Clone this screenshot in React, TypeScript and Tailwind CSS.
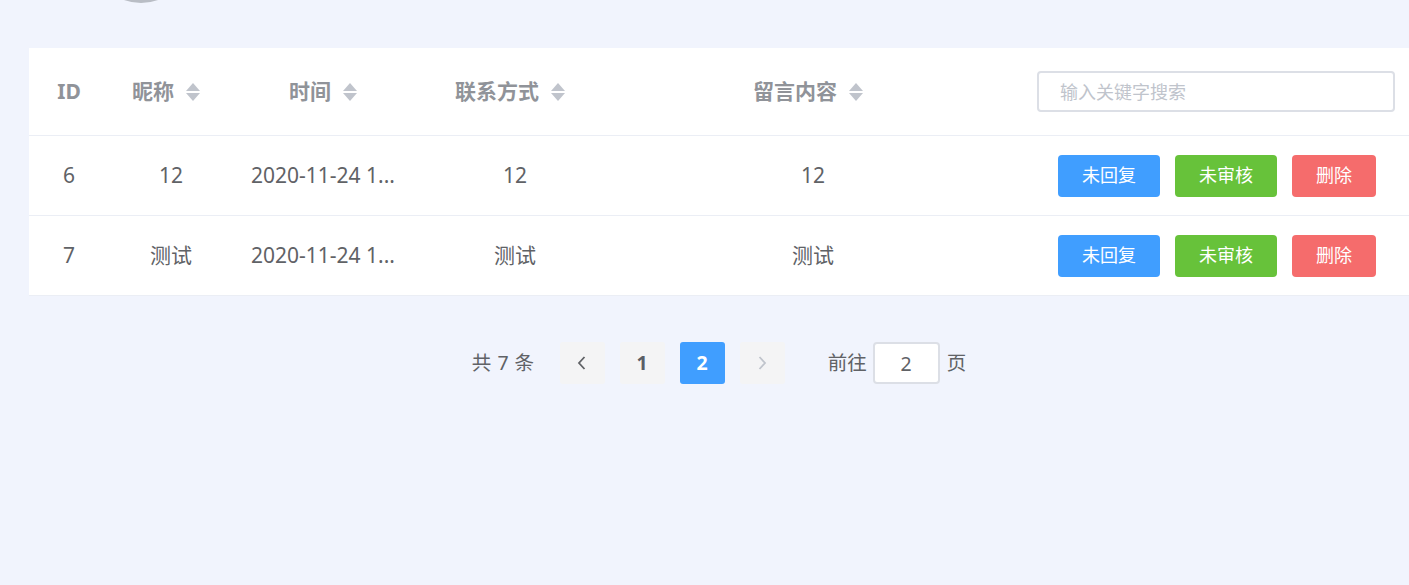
import React from "react";

const rows = [
  { id: 6, name: "12", time: "2020-11-24 1...", contact: "12", content: "12" },
  { id: 7, name: "测试", time: "2020-11-24 1...", contact: "测试", content: "测试" },
];

const SortCaret = () => (
  <span className="ml-3 inline-flex flex-col items-center gap-[2px]">
    <svg width="14" height="8" viewBox="0 0 14 8">
      <path d="M7 0 L14 8 L0 8 Z" fill="#c0c4cc" />
    </svg>
    <svg width="14" height="8" viewBox="0 0 14 8">
      <path d="M0 0 L14 0 L7 8 Z" fill="#c0c4cc" />
    </svg>
  </span>
);

const HeadCell = ({ label, w, sort = true }: { label: string; w: string; sort?: boolean }) => (
  <div className={`${w} flex items-center justify-center text-[21px] font-bold text-[#909399]`}>
    <span>{label}</span>
    {sort && <SortCaret />}
  </div>
);

export default function App() {
  return (
    <div
      className="min-h-[585px] bg-[#f1f4fd]"
      style={{ fontFamily: '"Noto Sans", "Noto Sans CJK SC", sans-serif' }}
    >
      {/* top, avatar scrolled out of view */}
      <div className="h-[48px] overflow-hidden pl-[91px]">
        <div className="-mt-[97px] h-[100px] w-[100px] rounded-full bg-[#b9bdc5]" />
      </div>

      <div className="ml-[29px] w-[1380px] bg-white">
        {/* header */}
        <div className="flex h-[88px] items-center border-b border-[#ebeef5]">
          <HeadCell label="ID" w="w-[80px]" sort={false} />
          <HeadCell label="昵称" w="w-[124px] pr-[10px]" />
          <HeadCell label="时间" w="w-[180px]" />
          <HeadCell label="联系方式" w="w-[204px] pr-[10px]" />
          <HeadCell label="留言内容" w="w-[392px] pr-[10px]" />
          <div className="flex-1 pl-[28px]">
            <input
              placeholder="输入关键字搜索"
              className="h-[41px] w-[358px] rounded-[4px] border-2 border-[#dcdfe6] px-[21px] text-[18px] text-[#606266] outline-none placeholder:text-[#c0c4cc]"
            />
          </div>
        </div>

        {/* rows */}
        {rows.map((r) => (
          <div
            key={r.id}
            className="flex h-[80px] items-center border-b border-[#ebeef5] text-[21px] text-[#606266]"
          >
            <div className="w-[80px] text-center">{r.id}</div>
            <div className="w-[124px] text-center">{r.name}</div>
            <div className="w-[180px] text-center">{r.time}</div>
            <div className="w-[204px] text-center">{r.contact}</div>
            <div className="w-[392px] text-center">{r.content}</div>
            <div className="flex flex-1 gap-[15px] pl-[49px] text-[18px] text-white">
              <button className="h-[42px] rounded-[4px] bg-[#409eff] px-6">未回复</button>
              <button className="h-[42px] rounded-[4px] bg-[#67c23a] px-6">未审核</button>
              <button className="h-[42px] rounded-[4px] bg-[#f56c6c] px-6">删除</button>
            </div>
          </div>
        ))}
      </div>

      {/* pagination */}
      <div className="ml-[29px] mt-[46px] flex w-[1380px] items-center justify-center text-[19.5px] text-[#606266]">
        <span className="mr-[25px] tracking-[0.5px]">共 7 条</span>
        <button className="flex h-[42px] w-[45px] items-center justify-center rounded-[3px] bg-[#f4f4f5] text-[#606266]">
          <svg width="12" height="18" viewBox="0 0 12 18" fill="none" stroke="currentColor" strokeWidth="1.8">
            <path d="M8.5 3 L3 9 L8.5 15" />
          </svg>
        </button>
        <button className="ml-[15px] h-[42px] w-[45px] rounded-[3px] bg-[#f4f4f5] font-bold text-[#5a5e66]">1</button>
        <button className="ml-[15px] h-[42px] w-[45px] rounded-[3px] bg-[#409eff] font-bold text-white">2</button>
        <button className="ml-[15px] flex h-[42px] w-[45px] items-center justify-center rounded-[3px] bg-[#f4f4f5] text-[#c0c4cc]">
          <svg width="12" height="18" viewBox="0 0 12 18" fill="none" stroke="currentColor" strokeWidth="1.8">
            <path d="M3.5 3 L9 9 L3.5 15" />
          </svg>
        </button>
        <span className="ml-[43px]">前往</span>
        <input
          defaultValue="2"
          className="ml-[6px] h-[42px] w-[67px] rounded-[4px] border-2 border-[#dcdfe6] bg-white text-center text-[19.5px] text-[#606266] outline-none"
        />
        <span className="ml-[7px]">页</span>
      </div>
    </div>
  );
}
